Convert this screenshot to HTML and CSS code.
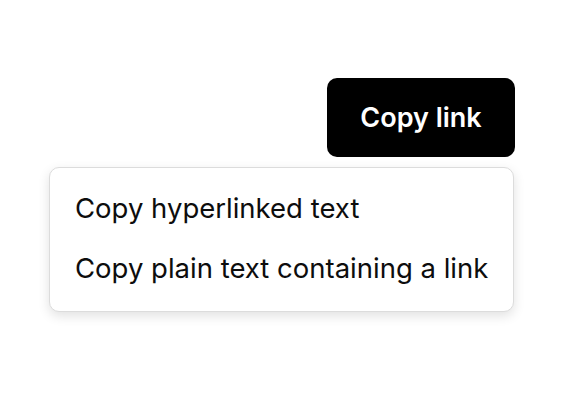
FILE: index.html
```html
<!DOCTYPE html>
<html>
<head>
<meta charset="utf-8">
<link rel="stylesheet" href="styles.css">
</head>
<body>
<div class="wrap">
  <button class="copy-btn">Copy link</button>
  <div class="menu">
    <div class="item">Copy hyperlinked text</div>
    <div class="item">Copy plain text containing a link</div>
  </div>
</div>
</body>
</html>
```
FILE: styles.css
```css
html, body {
  margin: 0;
  padding: 0;
  background: #ffffff;
}
body {
  font-family: Inter, "Noto Sans", sans-serif;
  width: 570px;
  height: 408px;
}
.wrap {
  margin-left: 49px;
  padding-top: 78px;
  width: 465px;
  display: flex;
  flex-direction: column;
  align-items: flex-end;
  gap: 10px;
}
.copy-btn {
  width: 188px;
  height: 79px;
  margin-right: -1px;
  border: none;
  border-radius: 10px;
  background: #000000;
  color: #ffffff;
  font-family: Inter, "Noto Sans", sans-serif;
  font-size: 27px;
  font-weight: 600;
  padding: 0;
}
.menu {
  box-sizing: border-box;
  width: 465px;
  border: 1px solid #dcdcdc;
  border-radius: 10px;
  background: #ffffff;
  box-shadow: 0 4px 12px rgba(0, 0, 0, 0.12);
  padding: 10px 0 13px 25px;
}
.item {
  height: 60px;
  line-height: 60px;
  font-size: 27.5px;
  color: #0d0d0d;
  white-space: nowrap;
}
```
